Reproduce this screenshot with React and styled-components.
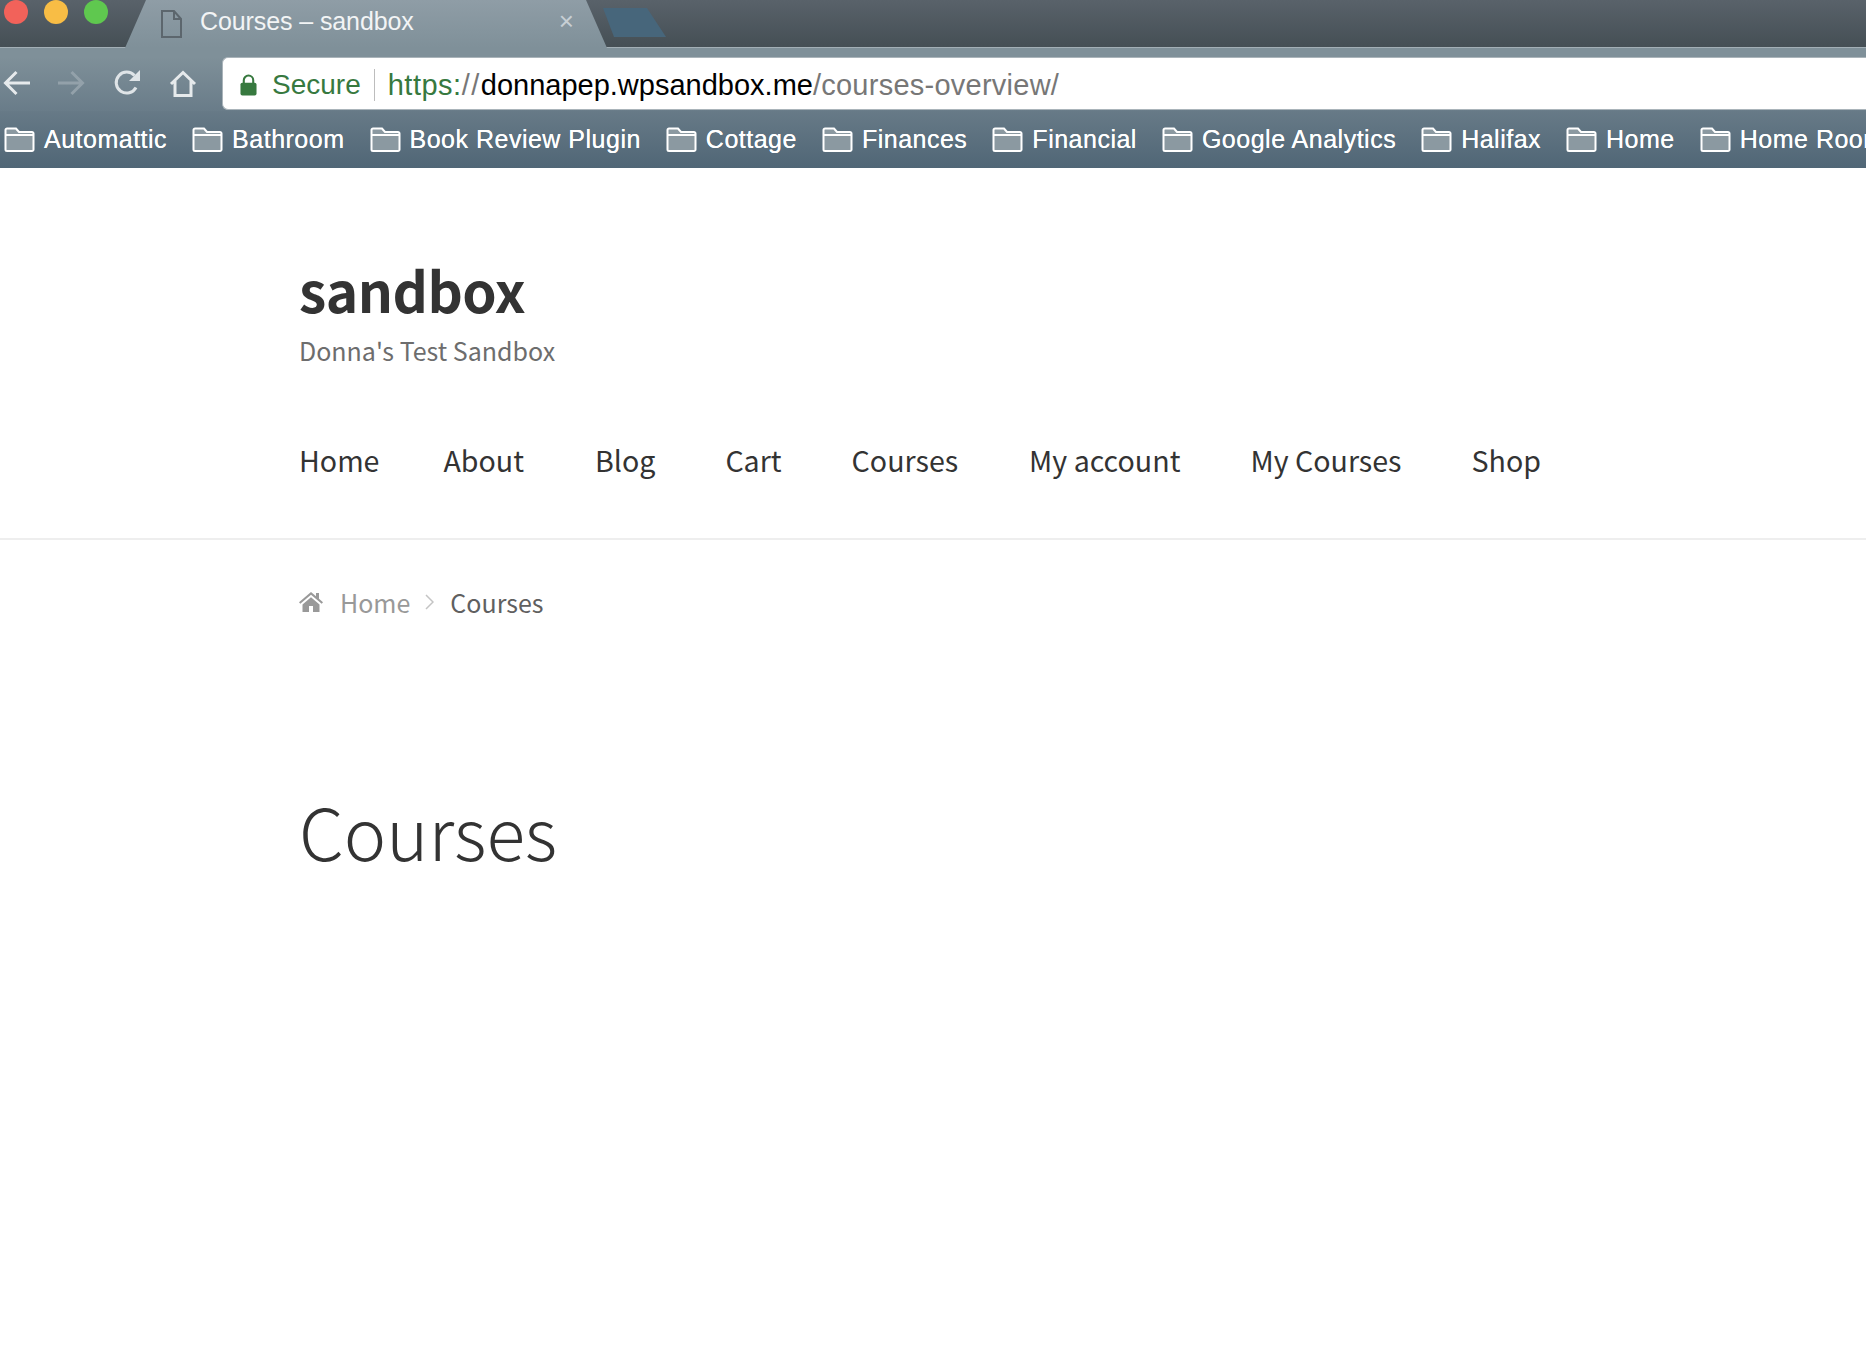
import React from 'react';
import styled, { createGlobalStyle } from 'styled-components';

const GlobalStyle = createGlobalStyle`
  html, body {
    margin: 0;
    padding: 0;
    background: #fff;
  }
`;

const Page = styled.div`
  width: 1866px;
  height: 1368px;
  overflow: hidden;
  background: #fff;
  font-family: "Noto Sans CJK SC", "Noto Sans", sans-serif;
`;

// --- browser chrome ---

const TabStrip = styled.div`
  height: 47px;
  display: flex;
  align-items: flex-start;
  background: linear-gradient(#59626a, #454f55);
  border-bottom: 1px solid #a3afb6;
`;

const Lights = styled.div`
  width: 125px;
  flex: none;
  display: flex;
  gap: 16px;
  padding-left: 4px;
  box-sizing: border-box;
`;

const Light = styled.span`
  width: 24px;
  height: 24px;
  border-radius: 50%;
  background: ${(p) => p.$color};
`;

const Tab = styled.div`
  width: 482px;
  height: 48px;
  flex: none;
  box-sizing: border-box;
  padding: 0 33px 0 36px;
  display: flex;
  align-items: center;
  color: #f2f4f5;
  font-family: "Liberation Sans", Arial, sans-serif;
  font-size: 25px;
  background: linear-gradient(#8f9da6, #7f9099);
  clip-path: polygon(21px 0, 461px 0, 482px 100%, 0 100%);
`;

const TabTitle = styled.span`
  margin-left: 18px;
  flex: 1;
  letter-spacing: -0.1px;
  position: relative;
  top: -3px;
`;

const TabClose = styled.span`
  color: #c7cfd4;
  font-size: 26px;
  position: relative;
  top: -3px;
`;

const NewTab = styled.div`
  width: 63px;
  height: 29px;
  margin: 8px 0 0 -4px;
  background: #47667b;
  clip-path: polygon(0 0, 44px 0, 100% 100%, 11px 100%);
`;

const Toolbar = styled.div`
  height: 63px;
  display: flex;
  align-items: flex-start;
  background: linear-gradient(#7f9099 0, #7f9099 9px, #697c89 100%);
`;

const NavButtons = styled.div`
  width: 222px;
  flex: none;
  height: 63px;
  padding: 7px 0 0 3px;
  display: flex;
  align-items: center;
  gap: 28px;
  box-sizing: border-box;
`;

const AddressBar = styled.div`
  flex: 1;
  height: 53px;
  margin-top: 9px;
  box-sizing: border-box;
  background: #fff;
  border: 1px solid #aab4ba;
  border-right: none;
  border-radius: 6px 0 0 6px;
  display: flex;
  align-items: center;
  padding: 3px 0 0 17px;
  font-family: "Liberation Sans", Arial, sans-serif;
  font-size: 29px;
`;

const Secure = styled.span`
  color: #37793f;
  font-size: 28px;
  margin-left: 15px;
`;

const UrlDivider = styled.span`
  width: 1px;
  height: 32px;
  background: #bdbdbd;
  margin: 0 13px;
`;

const UrlPart = styled.span`
  color: ${(p) => p.$color};
  letter-spacing: ${(p) => p.$spacing || 0}px;
`;

const Bookmarks = styled.div`
  height: 57px;
  display: flex;
  align-items: center;
  gap: 25px;
  padding-left: 4px;
  overflow: hidden;
  background: linear-gradient(#677a87, #506676);
`;

const Bookmark = styled.div`
  flex: none;
  display: flex;
  align-items: center;
  gap: 9px;
  color: #fff;
  font-family: "Liberation Sans", Arial, sans-serif;
  font-size: 25px;
  letter-spacing: 0.5px;
  text-shadow: 0 0 0.5px #fff;
`;

// --- site ---

const SiteHeader = styled.header`
  height: 372px;
  box-sizing: border-box;
  border-bottom: 2px solid #eeeeee;
  padding: 81px 0 0 299px;
`;

const SiteTitle = styled.h1`
  margin: 0;
  font-size: 55px;
  line-height: 81px;
  font-weight: 700;
  color: #333;
  letter-spacing: -0.5px;
`;

const Tagline = styled.p`
  margin: 0;
  font-size: 25px;
  line-height: 40px;
  color: #6d6d6d;
`;

const Nav = styled.nav`
  display: flex;
  margin-top: 68px;
`;

const NavItem = styled.a`
  font-size: 28.600px;
  line-height: 44px;
  color: #333;
  margin-right: ${(p) => p.$gap}px;
`;

const Breadcrumb = styled.div`
  display: flex;
  align-items: center;
  padding: 42px 0 0 299px;
  font-size: 25px;
  line-height: 40px;
`;

const CrumbHome = styled.span`
  color: #999;
  margin-left: 17px;
`;

const CrumbSeparator = styled.span`
  display: flex;
  margin: 0 16px 0 15px;
`;

const CrumbCurrent = styled.span`
  color: #606060;
`;

const PageTitle = styled.h2`
  margin: 158px 0 0 299px;
  font-size: 71.500px;
  line-height: 100px;
  font-weight: 300;
  color: #333;
`;

const ArrowIcon = ({ color, flip }) => (
  <svg width="27" height="26" viewBox="0 0 27 26" fill="none" stroke={color} strokeWidth="3" style={flip ? { transform: 'scaleX(-1)' } : undefined}>
    <path d="M27 13H3M13.5 2 2.5 13l11 11" />
  </svg>
);

const ReloadIcon = () => (
  <svg width="28" height="28" viewBox="0 0 28 28" fill="none">
    <path d="M23 18.500A10.500 10.500 0 1 1 21.500 6.500" stroke="#dfe4e7" strokeWidth="3" />
    <path d="M27 1v11H16z" fill="#dfe4e7" />
  </svg>
);

const HomeIcon = () => (
  <svg width="28" height="27" viewBox="0 0 28 27" fill="none" stroke="#e6eaec" strokeWidth="3">
    <path d="M2 14 14 2.500 26 14M6 11v14.500h16V11" />
  </svg>
);

const LockIcon = () => (
  <svg width="17" height="22" viewBox="0 0 18 22">
    <path d="M4 9V6a5 5 0 0 1 10 0v3" fill="none" stroke="#37793f" strokeWidth="2.200" />
    <rect x="0.500" y="8.500" width="17" height="13.500" rx="2" fill="#37793f" />
  </svg>
);

const PageIcon = () => (
  <svg width="21" height="28" viewBox="0 0 21 28" fill="none" stroke="#5c666d" strokeWidth="2">
    <path d="M1 1h12l7 8v18H1zM13 1v8h7" />
  </svg>
);

const FolderIcon = () => (
  <svg width="31" height="25" viewBox="0 0 31 25">
    <path d="M1.500 3a1.500 1.500 0 0 1 1.500-1.500h9l3 3.500h13a1.500 1.500 0 0 1 1.500 1.500v16a1.500 1.500 0 0 1-1.500 1.500H3a1.500 1.500 0 0 1-1.500-1.500z" fill="#8b99a1" stroke="#fff" strokeWidth="2" />
    <path d="M1.500 8h28" stroke="#fff" strokeWidth="2" />
  </svg>
);

const HouseGlyph = () => (
  <svg width="24" height="20" viewBox="0 0 24 20" fill="#999">
    <path d="M12 0 0 10.200l1.300 1.500L12 2.700l10.700 9 1.300-1.500-4-3.400V1h-3v3.300zM3.500 12.500V20H10v-6h4v6h6.500v-7.500L12 5.300z" />
  </svg>
);

const ChevronGlyph = () => (
  <svg width="9" height="16" viewBox="0 0 9 16" fill="none" stroke="#c4c4c4" strokeWidth="1.500">
    <path d="m1 1 7 7-7 7" />
  </svg>
);

const bookmarks = ['Automattic', 'Bathroom', 'Book Review Plugin', 'Cottage', 'Finances', 'Financial', 'Google Analytics', 'Halifax', 'Home', 'Home Rooms'];

const navItems = [
  ['Home', 64],
  ['About', 71],
  ['Blog', 70],
  ['Cart', 70],
  ['Courses', 71],
  ['My account', 70],
  ['My Courses', 70],
  ['Shop', 0],
];

const App = () => {
  return (
    <Page>
      <GlobalStyle />
      <TabStrip>
        <Lights>
          <Light $color="#f2625a" />
          <Light $color="#f8bd45" />
          <Light $color="#5fc84f" />
        </Lights>
        <Tab>
          <PageIcon />
          <TabTitle>Courses – sandbox</TabTitle>
          <TabClose>×</TabClose>
        </Tab>
        <NewTab />
      </TabStrip>
      <Toolbar>
        <NavButtons>
          <ArrowIcon color="#e6eaec" />
          <ArrowIcon color="#93a1aa" flip />
          <ReloadIcon />
          <HomeIcon />
        </NavButtons>
        <AddressBar>
          <LockIcon />
          <Secure>Secure</Secure>
          <UrlDivider />
          <UrlPart $color="#37793f" $spacing={0.5}>https:</UrlPart>
          <UrlPart $color="#777" $spacing={1.5}>//</UrlPart>
          <UrlPart $color="#000">donnapep.wpsandbox.me</UrlPart>
          <UrlPart $color="#777" $spacing={0.25}>/courses-overview/</UrlPart>
        </AddressBar>
      </Toolbar>
      <Bookmarks>
        {bookmarks.map((name) => (
          <Bookmark key={name}>
            <FolderIcon />
            {name}
          </Bookmark>
        ))}
      </Bookmarks>
      <SiteHeader>
        <SiteTitle>sandbox</SiteTitle>
        <Tagline>Donna's Test Sandbox</Tagline>
        <Nav>
          {navItems.map(([label, gap]) => (
            <NavItem key={label} $gap={gap}>{label}</NavItem>
          ))}
        </Nav>
      </SiteHeader>
      <Breadcrumb>
        <HouseGlyph />
        <CrumbHome>Home</CrumbHome>
        <CrumbSeparator><ChevronGlyph /></CrumbSeparator>
        <CrumbCurrent>Courses</CrumbCurrent>
      </Breadcrumb>
      <PageTitle>Courses</PageTitle>
    </Page>
  );
};

export default App;
